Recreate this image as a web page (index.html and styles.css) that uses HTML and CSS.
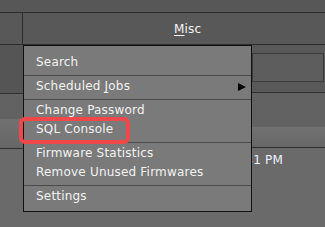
FILE: index.html
```html
<!DOCTYPE html>
<html lang="en">
<head>
  <meta charset="UTF-8" />
  <title>Misc menu</title>
  <link rel="stylesheet" href="styles.css">
</head>
<body>
  <div class="topbar"></div>
  <div class="header">
    <div class="corner"></div>
    <div class="col-title"><u>M</u>isc</div>
  </div>
  <div class="body">
    <div class="side">
      <div class="side-tools"></div>
      <div class="side-gap"></div>
      <div class="side-head"></div>
    </div>
    <div class="content">
      <div class="toolbar"><div class="search-box"></div></div>
      <div class="gap"></div>
      <div class="thead"></div>
      <div class="row">4:53:31 PM</div>
    </div>
  </div>

  <div class="menu">
    <div class="item">Search</div>
    <div class="sep"></div>
    <div class="item has-sub">Scheduled <u>J</u>obs <span class="arrow"></span></div>
    <div class="sep"></div>
    <div class="item">Change Password</div>
    <div class="item">SQL Console</div>
    <div class="sep"></div>
    <div class="item">Firmware Statistics</div>
    <div class="item">Remove Unused Firmwares</div>
    <div class="sep"></div>
    <div class="item">Settings</div>
  </div>
  <!-- highlight round the SQL Console item -->
  <div class="mark"></div>
</body>
</html>
```

FILE: styles.css
```css
body {
  margin: 0;
  font-family: "DejaVu Sans", Verdana, sans-serif;
  font-size: 12px;
  letter-spacing: 0.2px;
  background: #6a6a6a;
  color: #f0f0f0;
  overflow: hidden;
}
.topbar {
  height: 12px;
  background: #575757;
  border-bottom: 1px solid #2d2d2d;
}
.header {
  display: flex;
  height: 31px;
  background: #585858;
  border-bottom: 1px solid #2d2d2d;
}
.corner {
  width: 22px;
  border-right: 1px solid #2d2d2d;
}
.col-title {
  flex: 1;
  padding-left: 151px;
  line-height: 32px;
  color: #f4f4f4;
}
.col-title u {
  text-underline-offset: 2px;
}
.body {
  display: flex;
}
.side {
  width: 23px;
}
.side-tools {
  height: 48px;
  background: #555555;
  border-bottom: 1px solid #2f2f2f;
}
.side-gap {
  height: 25px;
  background: #626262;
}
.side-head {
  height: 29px;
  background: linear-gradient(#717171, #666666);
  border-bottom: 1px solid #2f2f2f;
}
.content {
  flex: 1;
}
.toolbar {
  height: 48px;
  padding: 8px 1px 0 229px;
  box-sizing: border-box;
  background: #595959;
  border-bottom: 1px solid #2f2f2f;
}
.search-box {
  height: 29px;
  box-sizing: border-box;
  background: #5d5d5d;
  border: 1px solid #3b3b3b;
}
.gap {
  height: 34px;
  background: #626262;
}
.thead {
  height: 20px;
  background: linear-gradient(#727272, #676767);
  border-bottom: 1px solid #2f2f2f;
}
.row {
  padding: 3px 42px 0 0;
  text-align: right;
  line-height: 19px;
  color: #eef0ff;
}
.menu {
  position: absolute;
  left: 23px;
  top: 45px;
  width: 229px;
  box-sizing: border-box;
  padding: 7px 0 5px;
  background: #7a7a7a;
  border: 1px solid #111;
}
.item {
  position: relative;
  height: 19px;
  line-height: 19px;
  padding-left: 12px;
  color: #f2f2f2;
  white-space: nowrap;
}
.item u {
  text-underline-offset: 2px;
}
.arrow {
  position: absolute;
  right: 5px;
  top: 6px;
  border-left: 8px solid #000;
  border-top: 4px solid transparent;
  border-bottom: 4px solid transparent;
}
.sep {
  height: 1px;
  margin: 3px 0 1px;
  background: #4a4a4a;
}
.mark {
  position: absolute;
  left: 19px;
  top: 117px;
  width: 111px;
  height: 27px;
  box-sizing: border-box;
  border: 4px solid #f0474a;
  border-radius: 6px;
}
```
